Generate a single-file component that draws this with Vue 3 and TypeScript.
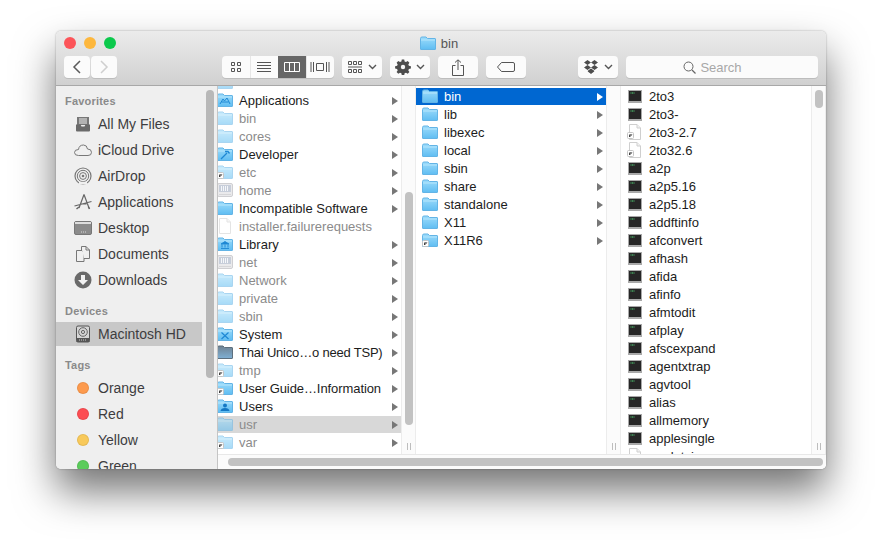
<template>
  <div class="page">
    <!-- shared icon symbols -->
    <svg class="defs" aria-hidden="true">
      <defs>
        <linearGradient id="fg" x1="0" y1="0" x2="0" y2="1">
          <stop offset="0" stop-color="#9ddcfb" />
          <stop offset="1" stop-color="#5fbdf2" />
        </linearGradient>
        <linearGradient id="fg-dark" x1="0" y1="0" x2="0" y2="1">
          <stop offset="0" stop-color="#6f8292" />
          <stop offset="1" stop-color="#7fb0d4" />
        </linearGradient>
        <symbol id="folder" viewBox="0 0 16 16">
          <path d="M.5 3.5Q.5 2 2 2H6L7.5 3.5H15q.5 0 .5.5V14q0 .5-.5.5H1q-.5 0-.5-.5Z" fill="url(#fg)" stroke="#63b4e6" />
          <path d="M1 5H15" stroke="#b5e6fc" />
        </symbol>
        <symbol id="folder-dark" viewBox="0 0 16 16">
          <path d="M.5 3.5Q.5 2 2 2H6L7.5 3.5H15q.5 0 .5.5V14q0 .5-.5.5H1q-.5 0-.5-.5Z" fill="url(#fg-dark)" stroke="#5d6f7d" />
        </symbol>
        <symbol id="folder-apps" viewBox="0 0 16 16">
          <use href="#folder" width="16" height="16" />
          <path d="M3 12l3-5 1.5 2L10 6l3 6M4.5 10h7" fill="none" stroke="#1e88d4" stroke-width="1" />
        </symbol>
        <symbol id="folder-dev" viewBox="0 0 16 16">
          <use href="#folder" width="16" height="16" />
          <path d="M4 13l6-6M8 5.500h3l1.500 2" fill="none" stroke="#1e88d4" stroke-width="1.300" />
        </symbol>
        <symbol id="folder-lib" viewBox="0 0 16 16">
          <use href="#folder" width="16" height="16" />
          <path d="M4 8l4-2.500L12 8ZM5 8.500v3M8 8.500v3M11 8.500v3M4 12.500h8" fill="#1e88d4" stroke="#1e88d4" stroke-width=".9" />
        </symbol>
        <symbol id="folder-sys" viewBox="0 0 16 16">
          <use href="#folder" width="16" height="16" />
          <path d="M4.500 6.500l7 6.500M11.500 6.500l-7 6.500" fill="none" stroke="#1e88d4" stroke-width="1.200" />
        </symbol>
        <symbol id="folder-user" viewBox="0 0 16 16">
          <use href="#folder" width="16" height="16" />
          <circle cx="8" cy="7.500" r="2" fill="#1478c4" />
          <path d="M3.500 13q.5-3 4.500-3t4.500 3Z" fill="#1478c4" />
        </symbol>
        <symbol id="volume" viewBox="0 0 16 16">
          <rect x=".5" y="1.500" width="15" height="13" rx="1.500" fill="#d9d9de" stroke="#a9a9ae" />
          <rect x="2" y="3" width="12" height="7" fill="#9aa7bd" />
          <path d="M4.500 4v5M6.500 4v5M8.500 4v5M10.500 4v5" stroke="#eef1f6" />
          <path d="M2 12.500h12" stroke="#b6b6ba" />
        </symbol>
        <symbol id="doc" viewBox="0 0 16 16">
          <path d="M2.500 .5H10L13.500 4V15.500H2.500Z" fill="#fff" stroke="#cfcfcf" />
          <path d="M10 .5V4H13.500" fill="#f2f2f2" stroke="#cfcfcf" />
        </symbol>
        <symbol id="terminal" viewBox="0 0 16 16">
          <rect x="1" y="2" width="14" height="13" fill="#a9a9a9" />
          <rect x="2" y="3" width="12" height="10" fill="#262626" />
          <path d="M3.500 5h4" stroke="#52d878" stroke-dasharray="1 .5" />
        </symbol>
        <symbol id="alias" viewBox="0 0 7 7">
          <rect x=".5" y=".5" width="6" height="6" rx="1" fill="#fff" stroke="#c4c4c4" />
          <path d="M2.500 5V2.800h2.200M2.500 5L4.800 2.600" fill="none" stroke="#222" stroke-width=".8" />
        </symbol>
        <symbol id="chevron" viewBox="0 0 9 6">
          <path d="M1 1l3.500 3.500L8 1" fill="none" stroke="#555" stroke-width="1.400" />
        </symbol>
        <symbol id="dropbox" viewBox="0 0 16 16">
          <path d="M4.500 1L8 3.500 4.500 6 1 3.500ZM11.500 1L15 3.500 11.500 6 8 3.500ZM4.500 6L8 8.500 4.500 11 1 8.500ZM11.500 6L15 8.500 11.500 11 8 8.500ZM4.800 11.800L8 9.500l3.200 2.300V12.600L8 15 4.800 12.600Z" fill="#4d4d4d" />
        </symbol>
      </defs>
    </svg>

    <div class="window">
      <header class="chrome">
        <div class="titlebar">
          <div class="lights">
            <span class="light red"></span>
            <span class="light amber"></span>
            <span class="light green"></span>
          </div>
          <div class="title">
            <svg class="title-icon"><use href="#folder" /></svg>
            <span>bin</span>
          </div>
        </div>

        <div class="toolbar">
          <div class="seg">
            <button class="btn nav">
              <svg width="10" height="16" viewBox="0 0 10 16"><path d="M8 2L2 8l6 6" fill="none" stroke="#5a5a5a" stroke-width="1.500" /></svg>
            </button>
            <button class="btn nav">
              <svg width="10" height="16" viewBox="0 0 10 16"><path d="M2 2l6 6-6 6" fill="none" stroke="#cfcfcf" stroke-width="1.500" /></svg>
            </button>
          </div>

          <div class="views">
            <button class="view">
              <svg width="14" height="14" viewBox="0 0 14 14"><path d="M2.500 2.500h3v3h-3zM8.500 2.500h3v3h-3zM2.500 8.500h3v3h-3zM8.500 8.500h3v3h-3z" fill="none" stroke="#555" /></svg>
            </button>
            <button class="view">
              <svg width="16" height="14" viewBox="0 0 16 14"><path d="M1 2.500h14M1 5.500h14M1 8.500h14M1 11.500h14" stroke="#555" /></svg>
            </button>
            <button class="view active">
              <svg width="16" height="12" viewBox="0 0 16 12"><path d="M.5 1.500h15v9H.5zM5.500 1.500v9M10.500 1.500v9" fill="none" stroke="#fff" /></svg>
            </button>
            <button class="view">
              <svg width="20" height="14" viewBox="0 0 20 14"><path d="M6.500 3.500h7v7h-7zM1 2v10M3.500 2v10M16.500 2v10M19 2v10" fill="none" stroke="#555" /></svg>
            </button>
          </div>

          <button class="btn tool arrange">
            <svg width="16" height="14" viewBox="0 0 16 14"><path d="M1.500 1.500h3v3h-3zM6.500 1.500h3v3h-3zM11.500 1.500h3v3h-3zM1.500 9.500h3v3h-3zM6.500 9.500h3v3h-3zM11.500 9.500h3v3h-3z" fill="none" stroke="#555" /><path d="M1 7h14" stroke="#555" /></svg>
            <svg class="chev"><use href="#chevron" /></svg>
          </button>
          <button class="btn tool action">
            <svg width="16" height="16" viewBox="0 0 16 16">
              <path d="M6.800 1h2.400l.4 2 1.400.6L12.700 2.500l1.700 1.700-1.100 1.700.6 1.400 2 .4v2.400l-2 .4-.6 1.400 1.100 1.700-1.700 1.700-1.700-1.100-1.400.6-.4 2H6.800l-.4-2-1.400-.6-1.700 1.100-1.700-1.700 1.100-1.700-.6-1.400-2-.4V7.700l2-.4.6-1.400L1.600 4.200 3.300 2.500 5 3.600l1.400-.6Z" transform="translate(0 -.5)" fill="#4d4d4d" />
              <circle cx="8" cy="8" r="2.200" fill="#f6f6f6" />
            </svg>
            <svg class="chev"><use href="#chevron" /></svg>
          </button>
          <button class="btn tool share">
            <svg width="12" height="17" viewBox="0 0 12 17"><path d="M3.500 6.500H.5v10h11v-10h-3M6 11V1M3 3.500L6 .8l3 2.700" fill="none" stroke="#555" /></svg>
          </button>
          <button class="btn tool tag">
            <svg width="18" height="10" viewBox="0 0 18 10"><path d="M4.500 .5H16q1.500 0 1.500 1.500v6q0 1.500-1.500 1.500H4.500L.5 5Z" fill="none" stroke="#555" /></svg>
          </button>
          <button class="btn tool drop">
            <svg width="16" height="16"><use href="#dropbox" /></svg>
            <svg class="chev"><use href="#chevron" /></svg>
          </button>
          <div class="search">
            <svg width="13" height="13" viewBox="0 0 13 13"><circle cx="5.500" cy="5.500" r="4.500" fill="none" stroke="#666" /><path d="M9 9l3.500 3.500" stroke="#666" stroke-width="1.200" /></svg>
            <span>Search</span>
          </div>
        </div>
      </header>

      <div class="body">
        <aside class="sidebar">
          <template v-for="group in sidebar" :key="group.title">
            <h3 class="side-head">{{ group.title }}</h3>
            <div
              v-for="item in group.items"
              :key="item.name"
              class="side-row"
              :class="{ selected: item.selected }"
            >
              <span v-if="item.dot" class="dot" :style="{ background: item.dot }"></span>
              <svg v-else class="side-icon" viewBox="0 0 18 18" v-html="sideIcons[item.icon ?? '']"></svg>
              <span>{{ item.name }}</span>
            </div>
          </template>
          <div class="side-thumb"></div>
        </aside>

        <div class="browser">
          <div class="columns">
            <section v-for="col in columns" :key="col.id" class="column" :class="col.id">
              <div class="list">
                <div
                  v-for="(row, i) in col.rows"
                  :key="i"
                  class="row"
                  :class="{ dim: row.dim, open: row.open, selected: row.selected }"
                >
                  <span class="ico">
                    <svg class="ico-main"><use :href="'#' + row.icon" /></svg>
                    <svg v-if="row.alias" class="ico-alias"><use href="#alias" /></svg>
                  </span>
                  <span class="name" :class="row.fit">{{ row.name }}</span>
                  <span v-if="row.arrow" class="arrow"></span>
                </div>
              </div>
              <div class="strip">
                <div v-if="col.thumb" class="v-thumb" :style="{ top: col.thumb[0] + 'px', height: col.thumb[1] + 'px' }"></div>
                <span class="grip"></span>
              </div>
            </section>
          </div>
          <div class="hbar"><div class="h-thumb"></div></div>
        </div>
      </div>
    </div>
  </div>
</template>

<script setup lang="ts">
interface Row {
  name: string
  icon: string
  dim?: boolean
  arrow?: boolean
  alias?: boolean
  open?: boolean
  selected?: boolean
  fit?: string
}

interface SideItem {
  name: string
  icon?: string
  dot?: string
  selected?: boolean
}

const sideIcons: Record<string, string> = {
  files:
    '<path d="M3 2h12v8H3z" fill="#777"/><path d="M5 4h8M5 6h8M5 8h8" stroke="#eee"/><path d="M2 9.500h4.500l1 2h3l1-2H16v6q0 1-1 1H3q-1 0-1-1Z" fill="#6a6a6a"/>',
  cloud:
    '<path d="M4.500 14.500Q.5 14.500 .5 11.500T4.500 8.500Q5 4 9.500 4 13 4 13.500 8q4 0 4 3.300t-3.500 3.200Z" fill="none" stroke="#777"/>',
  airdrop:
    '<circle cx="9" cy="9" r="8" fill="none" stroke="#777" stroke-width="1.200"/><circle cx="9" cy="9" r="5.700" fill="none" stroke="#777"/><circle cx="9" cy="9" r="3.400" fill="none" stroke="#777"/><circle cx="9" cy="9" r="1.300" fill="#777"/><path d="M5 16h8" stroke="#efefef" stroke-width="2.500"/>',
  apps:
    '<path d="M10 1.500L5 15M10 1.500l5 13.500M.5 13L17.500 8.500M6.500 11h6" fill="none" stroke="#666" stroke-width="1.200"/><path d="M2.500 16l2.500-2M15.500 16l-1-2" stroke="#666" stroke-width="1.600"/>',
  desktop:
    '<rect x=".5" y="2.500" width="17" height="13" rx="1.500" fill="#8b8b8b" stroke="#777"/><rect x="1" y="3" width="16" height="2" fill="#ddd"/><path d="M7 13h.8M9 13h.8M11 13h.8" stroke="#eee"/>',
  docs:
    '<path d="M2.500 5.500H8l2 2v9H2.500Z" fill="#f0f0f0" stroke="#777"/><path d="M7.500 1.500H12l3.500 3.500v8.500H10" fill="#f0f0f0" stroke="#777"/><path d="M7.500 5V1.500M12 1.500V5h3.500" fill="none" stroke="#777"/>',
  down:
    '<circle cx="9" cy="9" r="8.500" fill="#6a6a6a"/><path d="M7 4h4v5h3l-5 5-5-5h3Z" fill="#f2f2f2"/>',
  disk:
    '<rect x="2.500" y="1" width="13" height="16" rx="1.500" fill="#d5d5d5" stroke="#555"/><circle cx="9" cy="7" r="4.300" fill="none" stroke="#666"/><circle cx="9" cy="7" r="1.600" fill="none" stroke="#666"/><rect x="2.500" y="13" width="13" height="4" fill="#555"/><path d="M5 15h8" stroke="#ccc" stroke-dasharray="1 1"/>',
}

const sidebar: { title: string; items: SideItem[] }[] = [
  {
    title: 'Favorites',
    items: [
      { name: 'All My Files', icon: 'files' },
      { name: 'iCloud Drive', icon: 'cloud' },
      { name: 'AirDrop', icon: 'airdrop' },
      { name: 'Applications', icon: 'apps' },
      { name: 'Desktop', icon: 'desktop' },
      { name: 'Documents', icon: 'docs' },
      { name: 'Downloads', icon: 'down' },
    ],
  },
  { title: 'Devices', items: [{ name: 'Macintosh HD', icon: 'disk', selected: true }] },
  {
    title: 'Tags',
    items: [
      { name: 'Orange', dot: '#fd9a4d' },
      { name: 'Red', dot: '#fc4d52' },
      { name: 'Yellow', dot: '#f8c95a' },
      { name: 'Green', dot: '#5bcc5b' },
    ],
  },
]

const dirs = (names: string[]): Row[] =>
  names.map((name) => ({ name, icon: 'folder', arrow: true }))

const root: Row[] = [
  { name: '', icon: 'folder', dim: true },
  { name: 'Applications', icon: 'folder-apps', arrow: true },
  { name: 'bin', icon: 'folder', dim: true, arrow: true },
  { name: 'cores', icon: 'folder', dim: true, arrow: true },
  { name: 'Developer', icon: 'folder-dev', arrow: true },
  { name: 'etc', icon: 'folder', dim: true, arrow: true, alias: true },
  { name: 'home', icon: 'volume', dim: true, arrow: true },
  { name: 'Incompatible Software', icon: 'folder', arrow: true },
  { name: 'installer.failurerequests', icon: 'doc', dim: true },
  { name: 'Library', icon: 'folder-lib', arrow: true },
  { name: 'net', icon: 'volume', dim: true, arrow: true },
  { name: 'Network', icon: 'folder', dim: true, arrow: true },
  { name: 'private', icon: 'folder', dim: true, arrow: true },
  { name: 'sbin', icon: 'folder', dim: true, arrow: true },
  { name: 'System', icon: 'folder-sys', arrow: true },
  { name: 'Thai Unico…o need TSP)', icon: 'folder-dark', arrow: true, fit: 'tight' },
  { name: 'tmp', icon: 'folder', dim: true, arrow: true, alias: true },
  { name: 'User Guide…Information', icon: 'folder', arrow: true, alias: true, fit: 'snug' },
  { name: 'Users', icon: 'folder-user', arrow: true },
  { name: 'usr', icon: 'folder', dim: true, arrow: true, open: true },
  { name: 'var', icon: 'folder', dim: true, arrow: true, alias: true },
]

const usr: Row[] = dirs(['bin', 'lib', 'libexec', 'local', 'sbin', 'share', 'standalone', 'X11', 'X11R6'])
usr[0].selected = true
usr[8].alias = true

const aliases = ['2to3-2.7', '2to32.6']
const bin: Row[] = [
  '2to3', '2to3-', '2to3-2.7', '2to32.6', 'a2p', 'a2p5.16', 'a2p5.18', 'addftinfo', 'afconvert',
  'afhash', 'afida', 'afinfo', 'afmtodit', 'afplay', 'afscexpand', 'agentxtrap', 'agvtool', 'alias',
  'allmemory', 'applesingle',
].map((name) => ({
  name,
  icon: aliases.includes(name) ? 'doc' : 'terminal',
  alias: aliases.includes(name),
}))
bin.push({ name: 'appletviewer', icon: 'doc' })

const columns: { id: string; rows: Row[]; thumb?: [number, number] }[] = [
  { id: 'col-root', rows: root, thumb: [106, 233] },
  { id: 'col-usr', rows: usr },
  { id: 'col-bin', rows: bin, thumb: [4, 18] },
]
</script>

<style scoped>
.page {
  padding: 31px 56px 80px;
  font-family: "Liberation Sans", Arial, sans-serif;
  font-size: 13px;
  color: #1c1c1c;
}

.defs {
  position: absolute;
  width: 0;
  height: 0;
}

.window {
  width: 770px;
  height: 438px;
  display: flex;
  flex-direction: column;
  border-radius: 5px;
  overflow: hidden;
  box-shadow: 0 22px 40px rgba(0, 0, 0, 0.55), 0 0 2px rgba(0, 0, 0, 0.35);
}

.chrome {
  height: 54px;
  flex: none;
  background: linear-gradient(#ebebeb, #d0d0d0);
  border-bottom: 1px solid #a8a8a8;
  box-sizing: content-box;
}

.titlebar {
  height: 25px;
  display: grid;
  grid-template-columns: 1fr auto 1fr;
  align-items: center;
}

.lights {
  display: flex;
  gap: 8px;
  padding-left: 8px;
  margin-top: -1px;
}

.light {
  width: 12px;
  height: 12px;
  border-radius: 50%;
}
.light.red { background: #fc5459; }
.light.amber { background: #fdb73d; }
.light.green { background: #0bc94c; }

.title {
  display: flex;
  align-items: center;
  gap: 5px;
  color: #555;
  margin: -1px 4px 0 0;
}

.title-icon {
  width: 16px;
  height: 16px;
}

.toolbar {
  height: 22px;
  display: flex;
  align-items: stretch;
  padding-left: 8px;
}

button {
  padding: 0;
  border: 0;
  font: inherit;
}

.seg {
  display: flex;
  gap: 1px;
}

.btn {
  display: flex;
  align-items: center;
  justify-content: center;
  background: #fbfbfb;
  border-radius: 4px;
  box-shadow: 0 1px 0 #bdbdbd;
}

.nav {
  width: 26px;
}

.views {
  display: flex;
  width: 112px;
  margin-left: 105px;
  border-radius: 4px;
  overflow: hidden;
  background: #fbfbfb;
  box-shadow: 0 1px 0 #bdbdbd;
}

.view {
  flex: 1;
  display: flex;
  align-items: center;
  justify-content: center;
  background: none;
  border-left: 1px solid #e6e6e6;
}
.view:first-child { border-left: 0; }
.view.active { background: #666; border-left: 0; }

.tool {
  width: 40px;
  gap: 5px;
  margin-left: 8px;
}

.drop {
  margin-left: 52px;
}

.chev {
  width: 9px;
  height: 6px;
}

.search {
  width: 192px;
  margin-left: 8px;
  padding-right: 19px;
  box-sizing: border-box;
  display: flex;
  align-items: center;
  justify-content: center;
  gap: 4px;
  background: #fbfbfb;
  border-radius: 4px;
  box-shadow: 0 1px 0 #bdbdbd;
  color: #a8a8a8;
}

.body {
  flex: 1;
  min-height: 0;
  display: flex;
}

.sidebar {
  position: relative;
  width: 162px;
  flex: none;
  box-sizing: border-box;
  padding-top: 6px;
  background: #efefef;
  border-right: 1px solid #c4c4c4;
  overflow: hidden;
  color: #3d3d40;
  font-size: 14px;
}

.side-head {
  margin: 0 0 2px;
  padding-left: 9px;
  height: 18px;
  line-height: 18px;
  font-size: 11px;
  font-weight: 700;
  letter-spacing: 0.2px;
  color: #8a8a8a;
}

.side-row + .side-head {
  margin-top: 10px;
}

.side-row {
  width: 146px;
  height: 24px;
  margin-bottom: 2px;
  padding-left: 18px;
  box-sizing: border-box;
  display: flex;
  align-items: center;
  gap: 6px;
}
.side-row.selected { background: #c8c8c8; }

.side-icon {
  width: 18px;
  height: 18px;
  flex: none;
}

.dot {
  width: 12px;
  height: 12px;
  margin: 0 3px;
  border-radius: 50%;
  box-shadow: inset 0 0 0 1px rgba(0, 0, 0, 0.08);
}

.side-thumb {
  position: absolute;
  left: 150px;
  top: 4px;
  width: 8px;
  height: 288px;
  border-radius: 4px;
  background: #b8b8b8;
}

.browser {
  flex: 1;
  min-width: 0;
  display: flex;
  flex-direction: column;
  background: #fff;
}

.columns {
  flex: 1;
  min-height: 0;
  display: flex;
}

.column {
  display: flex;
  width: 205px;
  flex: none;
  overflow: hidden;
}
.col-root { width: 198px; }

.list {
  flex: 1;
  min-width: 0;
  padding-top: 2px;
}
.col-root .list {
  padding-top: 0;
  margin-top: -12px;
}

.row {
  height: 17px;
  margin-bottom: 1px;
  display: flex;
  align-items: center;
  gap: 6px;
  padding: 0 3px 0 6px;
}
.col-root .row { padding-left: 0; }
.col-root .ico { margin-left: -1px; }

.row.dim .name { color: #8b8b8b; }
.row.dim .ico-main { opacity: 0.55; }
.row.open { background: #d8d8d8; }
.row.selected { background: #0067d1; color: #fff; }
.row.selected .arrow { border-left-color: #fff; }

.ico {
  position: relative;
  top: -1px;
  width: 16px;
  height: 16px;
  flex: none;
}

.ico-main {
  display: block;
  width: 16px;
  height: 16px;
}

.ico-alias {
  position: absolute;
  left: 0;
  bottom: 1px;
  width: 7px;
  height: 7px;
}

.name {
  flex: 1;
  white-space: nowrap;
}
.name.tight { letter-spacing: -0.2px; }
.name.snug { letter-spacing: -0.08px; }

.arrow {
  width: 0;
  height: 0;
  border-left: 6px solid #777;
  border-top: 4px solid transparent;
  border-bottom: 4px solid transparent;
}

.strip {
  position: relative;
  width: 15px;
  flex: none;
  box-sizing: border-box;
  background: #fbfbfb;
  border-left: 1px solid #ececec;
  border-right: 1px solid #ececec;
}

.v-thumb {
  position: absolute;
  left: 3px;
  width: 8px;
  border-radius: 4px;
  background: #c2c2c2;
}

.grip {
  position: absolute;
  left: 5px;
  bottom: 4px;
  width: 2px;
  height: 7px;
  border-left: 1px solid #bdbdbd;
  border-right: 1px solid #bdbdbd;
  box-sizing: content-box;
}

.hbar {
  height: 15px;
  flex: none;
  box-sizing: border-box;
  padding: 3px 3px 0 10px;
  background: #fbfbfb;
  border-top: 1px solid #e8e8e8;
}

.h-thumb {
  height: 8px;
  border-radius: 4px;
  background: #c2c2c2;
}
</style>

<style>
html,
body {
  background: #fff;
  overflow: hidden;
}
</style>
